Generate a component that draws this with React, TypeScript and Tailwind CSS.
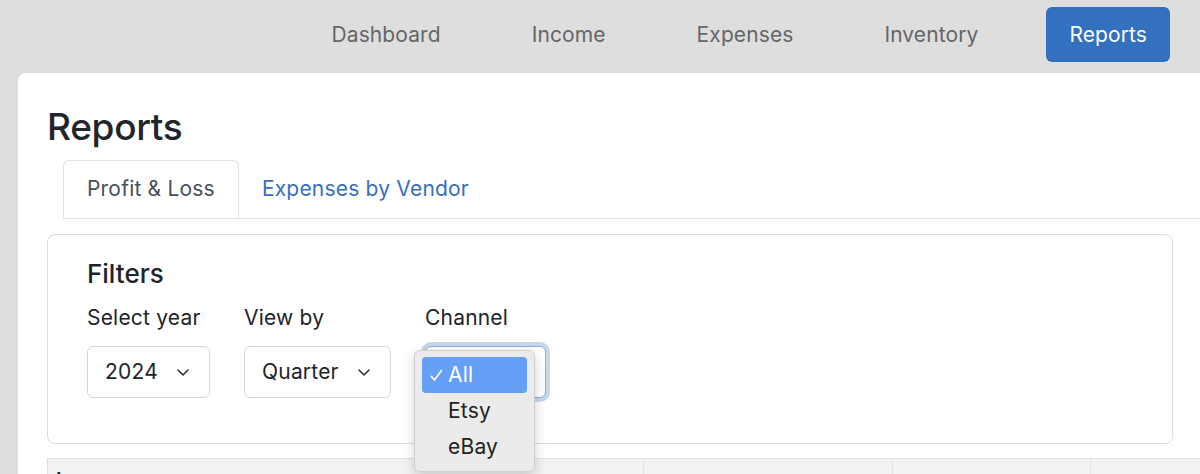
const navItems = ["Dashboard", "Income", "Expenses", "Inventory", "Reports"];

const Chevron = () => (
  <svg width="12" height="7" viewBox="0 0 12 7" fill="none" className="ml-[19px]">
    <path d="M1 1l5 5 5-5" stroke="#333" strokeWidth="1.6" strokeLinecap="round" strokeLinejoin="round" />
  </svg>
);

const SelectBox = ({ value, width }: { value: string; width: string }) => (
  <div
    className={`${width} h-[52px] flex items-center pl-[17px] border border-[#d6d9dc] rounded-[6px] bg-white text-[21px] tracking-[0.2px] text-[#212529]`}
  >
    <span>{value}</span>
    <Chevron />
  </div>
);

const App = () => {
  const channels = ["All", "Etsy", "eBay"];

  return (
    <div
      className="w-full h-[474px] overflow-hidden bg-[#dedede]"
      style={{ fontFamily: "Inter, 'Noto Sans', sans-serif" }}
    >
      {/* top nav */}
      <nav className="h-[73px] flex justify-end items-start pt-[7px] pr-[30px] gap-[45px]">
        {navItems.map((item) => (
          <div
            key={item}
            className={`h-[55px] px-[23px] flex items-center text-[21px] tracking-[0.1px] rounded-[6px] ${
              item === "Reports" ? "bg-[#3370bd] text-white" : "text-[#666]"
            }`}
          >
            {item}
          </div>
        ))}
      </nav>

      {/* card */}
      <div className="ml-[18px] bg-white rounded-tl-[8px] h-[401px] pt-[32px] pl-[29px]">
        <h1 className="text-[37px] leading-[43px] font-medium text-[#212529] tracking-[-0.3px]">Reports</h1>

        <div className="mt-[12px] ml-[16px] flex border-b border-[#dee2e6]">
          <div className="-mb-px px-[23px] h-[58px] flex items-center border border-[#dee2e6] border-b-white bg-white rounded-t-[6px] text-[21px] tracking-[0.2px] text-[#495057]">
            Profit &amp; Loss
          </div>
          <div className="px-[23px] h-[58px] flex items-center text-[21px] tracking-[0.2px] text-[#3470c0]">
            Expenses by Vendor
          </div>
        </div>

        {/* filters */}
        <div className="mt-[15px] mr-[27px] border border-[#d9dcdf] rounded-[8px] pt-[23px] pl-[39px] pb-[45px]">
          <h4 className="text-[26px] leading-[31px] font-medium text-[#212529]">Filters</h4>
          <div className="mt-[14px] flex gap-[34px]">
            <div className="flex flex-col gap-[13px]">
              <label className="text-[21px] tracking-[0.2px] leading-[30px] text-[#212529]">Select year</label>
              <SelectBox value="2024" width="w-[123px]" />
            </div>
            <div className="flex flex-col gap-[13px]">
              <label className="text-[21px] tracking-[0.2px] leading-[30px] text-[#212529]">View by</label>
              <SelectBox value="Quarter" width="w-[147px]" />
            </div>
            <div className="flex flex-col gap-[13px]">
              <label className="text-[21px] tracking-[0.2px] leading-[30px] text-[#212529]">Channel</label>
              <div className="relative w-[121px] h-[52px]">
                <div className="w-full h-full rounded-[6px] border border-[#8eb0dc] bg-white shadow-[0_0_0_4px_#c6d7ec]" />
                {/* open native-style menu */}
                <div className="absolute left-[-11px] top-[4px] w-[121px] py-[6px] px-[7px] bg-[#ebebeb] border border-[#cfcfcf] rounded-[6px] shadow-[0_4px_12px_rgba(0,0,0,0.18)]">
                  {channels.map((c, i) => (
                    <div
                      key={c}
                      className={`h-[36px] flex items-center rounded-[4px] text-[21px] tracking-[0.2px] ${
                        i === 0 ? "bg-[#64a0f6] text-white" : "text-[#222]"
                      }`}
                    >
                      <span className="w-[26px] flex justify-end pr-[5px]">
                        {i === 0 && (
                          <svg width="13" height="13" viewBox="0 0 13 13" fill="none">
                            <path d="M1.5 7.5l3 3.5L11.5 1.5" stroke="white" strokeWidth="1.7" strokeLinecap="round" strokeLinejoin="round" />
                          </svg>
                        )}
                      </span>
                      <span>{c}</span>
                    </div>
                  ))}
                </div>
              </div>
            </div>
          </div>
        </div>

        {/* table header (cut off by the window) */}
        <div className="mt-[14px] flex h-[40px] bg-[#f2f2f2] border-t border-l border-[#dee2e6] text-[20px] text-[#212529]">
          <div className="w-[595px] shrink-0 pl-[8px] pt-[6px] font-semibold">Income</div>
          <div className="w-[249px] shrink-0 border-l border-[#dee2e6] pt-[9px] pl-[145px] text-[#888]">Q1</div>
          <div className="w-[198px] shrink-0 border-l border-[#dee2e6] pt-[9px] pl-[100px] flex gap-[52px] text-[#888]">
            <span>Q2</span>
            <span>Q3</span>
          </div>
          <div className="w-[111px] shrink-0 border-l border-[#dee2e6] pt-[9px] pl-[100px] text-[#888] overflow-hidden">Q4</div>
        </div>
      </div>
    </div>
  );
};

export default App;
